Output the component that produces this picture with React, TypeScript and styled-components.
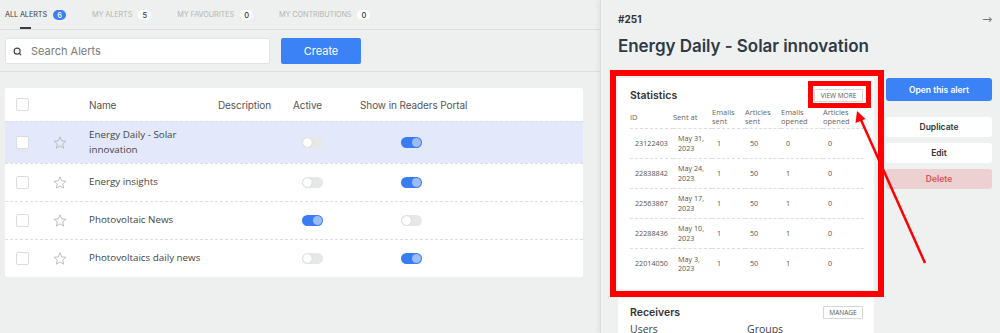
import React from 'react';
import styled, { createGlobalStyle } from 'styled-components';
import { Search } from 'lucide-react';

const Global = createGlobalStyle`
  html, body { margin: 0; padding: 0; }
  body {
    background: #eef0ef;
    font-family: Inter, "Open Sans", sans-serif;
    width: 1000px;
    height: 333px;
    overflow: hidden;
  }
  * { box-sizing: border-box; }
`;

const Page = styled.div`
  position: relative;
  display: flex;
  width: 1000px;
  height: 333px;
  overflow: hidden;
`;

const Left = styled.div`
  width: 600px;
  flex: none;
  display: flex;
  flex-direction: column;
`;

const Tabs = styled.div`
  height: 30px;
  border-bottom: 1px solid #dcdedd;
  display: flex;
  align-items: flex-start;
  gap: 26px;
  padding-left: 5px;
`;

const Tab = styled.div<{ $active?: boolean }>`
  display: flex;
  align-items: flex-start;
  gap: 6px;
  height: 29px;
  padding-top: 10px;
  font-size: 7.3px;
  letter-spacing: -0.1px;
  text-transform: uppercase;
  color: ${(p) => (p.$active ? '#3a3a3a' : '#b3b5b4')};
`;

const TabLabel = styled.span`
  display: inline-flex;
  flex-direction: column;
  align-items: center;
  line-height: 10px;
`;

const TabMark = styled.span<{ $active?: boolean }>`
  width: 11px;
  height: 2px;
  margin-top: 7px;
  background: ${(p) => (p.$active ? '#3a3d44' : 'transparent')};
`;

const Badge = styled.span<{ $blue?: boolean }>`
  display: inline-flex;
  align-items: center;
  justify-content: center;
  min-width: 13px;
  height: 10px;
  padding: 0 3px;
  border-radius: 5px;
  font-size: 7.5px;
  font-weight: 500;
  background: ${(p) => (p.$blue ? '#3b7ef5' : '#ffffff')};
  color: ${(p) => (p.$blue ? '#ffffff' : '#333')};
`;

const Toolbar = styled.div`
  display: flex;
  gap: 11px;
  padding: 8px 5px 7px 5px;
  border-bottom: 1px solid #dcdedd;
`;

const SearchBox = styled.div`
  width: 265px;
  height: 26px;
  background: #fff;
  border: 1px solid #e2e4e3;
  border-radius: 2px;
  display: flex;
  align-items: center;
  gap: 9px;
  padding-left: 7px;
  font-size: 11px;
  color: #7a7a7a;
`;

const CreateButton = styled.button`
  width: 80px;
  height: 26px;
  border: none;
  border-radius: 2px;
  background: #3a82f6;
  color: #fff;
  font-family: inherit;
  font-size: 11px;
`;

const TableCard = styled.div`
  margin: 16px 0 0 5px;
  width: 578px;
  background: #fff;
  border-radius: 3px;
  overflow: hidden;
`;

const Row = styled.div<{ $head?: boolean; $selected?: boolean }>`
  display: grid;
  grid-template-columns: 36px 48px 129px 75px 67px 1fr;
  align-items: center;
  min-height: ${(p) => (p.$head ? '33px' : '38px')};
  padding: 6px 0;
  background: ${(p) => (p.$selected ? '#e3e9fb' : '#fff')};
  border-top: ${(p) => (p.$head ? 'none' : '1px dashed #dedede')};
`;

const HeadCell = styled.div`
  font-size: 10px;
  color: #555;
  letter-spacing: -0.1px;
  white-space: nowrap;
`;

const NameCell = styled.div`
  font-family: "Open Sans", sans-serif;
  font-size: 9.8px;
  line-height: 14.5px;
  color: #444;
  padding-right: 2px;
`;

const CheckCell = styled.div`
  padding-left: 11px;
  display: flex;
`;

const Checkbox = styled.span`
  width: 13px;
  height: 13px;
  border: 1px solid #dcdcdc;
  border-radius: 2px;
  background: #fff;
`;

const StarCell = styled.div`
  padding-left: 12px;
  display: flex;
`;

const ToggleCell = styled.div<{ $offset: number }>`
  padding-left: ${(p) => p.$offset}px;
  display: flex;
`;

const Toggle = styled.span<{ $on?: boolean }>`
  position: relative;
  width: 21px;
  height: 11px;
  border-radius: 6px;
  background: ${(p) => (p.$on ? '#3a7cf3' : '#e6e7e7')};
  &::after {
    content: '';
    position: absolute;
    top: 1px;
    left: ${(p) => (p.$on ? '11px' : '1px')};
    width: 9px;
    height: 9px;
    border-radius: 50%;
    background: ${(p) => (p.$on ? '#9dbcf9' : '#ffffff')};
    box-shadow: ${(p) => (p.$on ? 'none' : '0 0 1px rgba(0,0,0,0.25)')};
  }
`;

const Right = styled.div`
  flex: 1;
  border-left: 1px solid #dddfde;
  box-shadow: -2px 0 4px rgba(0, 0, 0, 0.05);
  background: #eff1f0;
  padding: 13px 9px 0 17px;
  display: flex;
  flex-direction: column;
`;

const TopLine = styled.div`
  display: flex;
  justify-content: space-between;
  align-items: center;
  height: 12px;
`;

const AlertId = styled.span`
  font-size: 10px;
  font-weight: 700;
  color: #333;
`;

const CloseArrow = styled.span`
  font-size: 12px;
  color: #777;
  font-family: "DejaVu Sans", sans-serif;
`;

const Title = styled.h1`
  margin: 10px 0 0 0;
  font-size: 17px;
  line-height: 22px;
  font-weight: 600;
  color: #2f3a48;
  letter-spacing: -0.05px;
`;

const Divider = styled.div`
  height: 1px;
  background: #dadcdb;
  margin: 10px 0 0 1px;
`;

const Content = styled.div`
  display: grid;
  grid-template-columns: 256px 106px;
  column-gap: 12px;
  margin-top: 11px;
`;

const CardColumn = styled.div`
  display: flex;
  flex-direction: column;
  gap: 8px;
`;

const Card = styled.div<{ $top?: number }>`
  background: #fff;
  padding: ${(p) => p.$top ?? 11}px 10px 11px 12px;
`;

const CardHeader = styled.div`
  display: flex;
  justify-content: space-between;
  align-items: center;
  height: 13px;
`;

const CardTitle = styled.span`
  font-size: 10.5px;
  font-weight: 600;
  color: #333;
`;

const SmallButton = styled.span<{ $w: number }>`
  width: ${(p) => p.$w}px;
  height: 13px;
  margin-right: 1px;
  border: 1px solid #d6d6d6;
  border-radius: 1px;
  display: inline-flex;
  align-items: center;
  justify-content: center;
  font-family: "Open Sans", sans-serif;
  font-size: 6.5px;
  color: #555;
  background: #fff;
`;

const StatsGrid = styled.div`
  display: grid;
  grid-template-columns: 43px 39px 33px 36px 42px 41px;
  margin-top: 6px;
  font-family: "Open Sans", sans-serif;
`;

const StatHead = styled.div`
  font-size: 7.5px;
  line-height: 9px;
  color: #666;
  padding-bottom: 2px;
  border-bottom: 1px dashed #dedede;
  display: flex;
  align-items: center;
`;

const StatCell = styled.div<{ $last?: boolean }>`
  font-size: 7.2px;
  line-height: 9.5px;
  color: #555;
  padding-left: 5px;
  height: 30px;
  display: flex;
  align-items: center;
  border-bottom: ${(p) => (p.$last ? 'none' : '1px dashed #dedede')};
`;

const ReceiversRow = styled.div`
  display: flex;
  margin-top: 4px;
  font-family: "Open Sans", sans-serif;
  font-size: 10.5px;
  line-height: 12px;
  color: #444;
`;

const ReceiversCol = styled.span`
  width: 117px;
`;

const ButtonColumn = styled.div`
  display: flex;
  flex-direction: column;
  gap: 6px;
`;

const ActionButton = styled.div<{ $kind?: 'primary' | 'danger'; $gapTop?: number }>`
  height: ${(p) => (p.$kind === 'primary' ? '23px' : '20px')};
  margin-top: ${(p) => p.$gapTop ?? 0}px;
  border-radius: 3px;
  display: flex;
  align-items: center;
  justify-content: center;
  font-size: 8.5px;
  font-weight: 600;
  background: ${(p) => (p.$kind === 'primary' ? '#3a82f6' : p.$kind === 'danger' ? '#edd0d2' : '#ffffff')};
  color: ${(p) => (p.$kind === 'primary' ? '#ffffff' : p.$kind === 'danger' ? '#d9534f' : '#333')};
`;

const Overlay = styled.svg`
  position: absolute;
  left: 0;
  top: 0;
  pointer-events: none;
`;

const StarIcon = () => (
  <svg width="14" height="13" viewBox="0 0 24 23" fill="none" stroke="#b8b8b8" strokeWidth="1.6" strokeLinejoin="round">
    <polygon points="12,1.5 15,8.6 22.5,9.2 16.8,14.1 18.6,21.5 12,17.5 5.4,21.5 7.2,14.1 1.5,9.2 9,8.6" />
  </svg>
);

const alerts = [
  { name: 'Energy Daily - Solar innovation', active: false, portal: true, selected: true },
  { name: 'Energy insights', active: false, portal: true },
  { name: 'Photovoltaic News', active: true, portal: false },
  { name: 'Photovoltaics daily news', active: false, portal: true },
];

const stats = [
  ['23122403', 'May 31,', '1', '50', '0', '0'],
  ['22838842', 'May 24,', '1', '50', '1', '0'],
  ['22563867', 'May 17,', '1', '50', '1', '0'],
  ['22288436', 'May 10,', '1', '50', '1', '0'],
  ['22014050', 'May 3,', '1', '50', '1', '0'],
];

const tabs = [
  { label: 'All alerts', count: 6, active: true },
  { label: 'My alerts', count: 5 },
  { label: 'My favourites', count: 0 },
  { label: 'My contributions', count: 0 },
];

export default function App() {
  return (
    <>
      <Global />
      <Page>
        <Left>
          <Tabs>
            {tabs.map((t) => (
              <Tab key={t.label} $active={t.active}>
                <TabLabel>
                  {t.label}
                  <TabMark $active={t.active} />
                </TabLabel>
                <Badge $blue={t.active}>{t.count}</Badge>
              </Tab>
            ))}
          </Tabs>
          <Toolbar>
            <SearchBox>
              <Search size={9} strokeWidth={3} color="#444" />
              Search Alerts
            </SearchBox>
            <CreateButton>Create</CreateButton>
          </Toolbar>
          <TableCard>
            <Row $head>
              <CheckCell><Checkbox /></CheckCell>
              <div />
              <HeadCell>Name</HeadCell>
              <HeadCell>Description</HeadCell>
              <HeadCell>Active</HeadCell>
              <HeadCell>Show in Readers Portal</HeadCell>
            </Row>
            {alerts.map((a) => (
              <Row key={a.name} $selected={a.selected}>
                <CheckCell><Checkbox /></CheckCell>
                <StarCell><StarIcon /></StarCell>
                <NameCell>{a.name}</NameCell>
                <div />
                <ToggleCell $offset={9}><Toggle $on={a.active} /></ToggleCell>
                <ToggleCell $offset={41}><Toggle $on={a.portal} /></ToggleCell>
              </Row>
            ))}
          </TableCard>
        </Left>
        <Right>
          <TopLine>
            <AlertId>#251</AlertId>
            <CloseArrow>→</CloseArrow>
          </TopLine>
          <Title>Energy Daily - Solar innovation</Title>
          <Divider />
          <Content>
            <CardColumn>
              <Card>
                <CardHeader>
                  <CardTitle>Statistics</CardTitle>
                  <SmallButton $w={49}>VIEW MORE</SmallButton>
                </CardHeader>
                <StatsGrid>
                  <StatHead>ID</StatHead>
                  <StatHead>Sent at</StatHead>
                  <StatHead>Emails<br />sent</StatHead>
                  <StatHead>Articles<br />sent</StatHead>
                  <StatHead>Emails<br />opened</StatHead>
                  <StatHead>Articles<br />opened</StatHead>
                  {stats.map((r, i) =>
                    r.map((v, j) => (
                      <StatCell key={`${i}-${j}`} $last={i === stats.length - 1}>
                        {j === 1 ? (<span>{v}<br />2023</span>) : v}
                      </StatCell>
                    ))
                  )}
                </StatsGrid>
              </Card>
              <Card $top={8}>
                <CardHeader>
                  <CardTitle>Receivers</CardTitle>
                  <SmallButton $w={40}>MANAGE</SmallButton>
                </CardHeader>
                <ReceiversRow>
                  <ReceiversCol>Users</ReceiversCol>
                  <ReceiversCol>Groups</ReceiversCol>
                </ReceiversRow>
              </Card>
            </CardColumn>
            <ButtonColumn>
              <ActionButton $kind="primary">Open this alert</ActionButton>
              <ActionButton $gapTop={10}>Duplicate</ActionButton>
              <ActionButton>Edit</ActionButton>
              <ActionButton $kind="danger">Delete</ActionButton>
            </ButtonColumn>
          </Content>
        </Right>
        <Overlay width="1000" height="333" viewBox="0 0 1000 333">
          <rect x="613" y="73" width="268" height="221" fill="none" stroke="#ff0000" strokeWidth="6" />
          <rect x="810.5" y="83.5" width="58" height="22" fill="none" stroke="#ff0000" strokeWidth="5" />
          <line x1="925" y1="263" x2="861" y2="120" stroke="#ff0000" strokeWidth="2.5" />
          <polygon points="857,111 855.5,123 865.5,119" fill="#ff0000" />
        </Overlay>
      </Page>
    </>
  );
}
